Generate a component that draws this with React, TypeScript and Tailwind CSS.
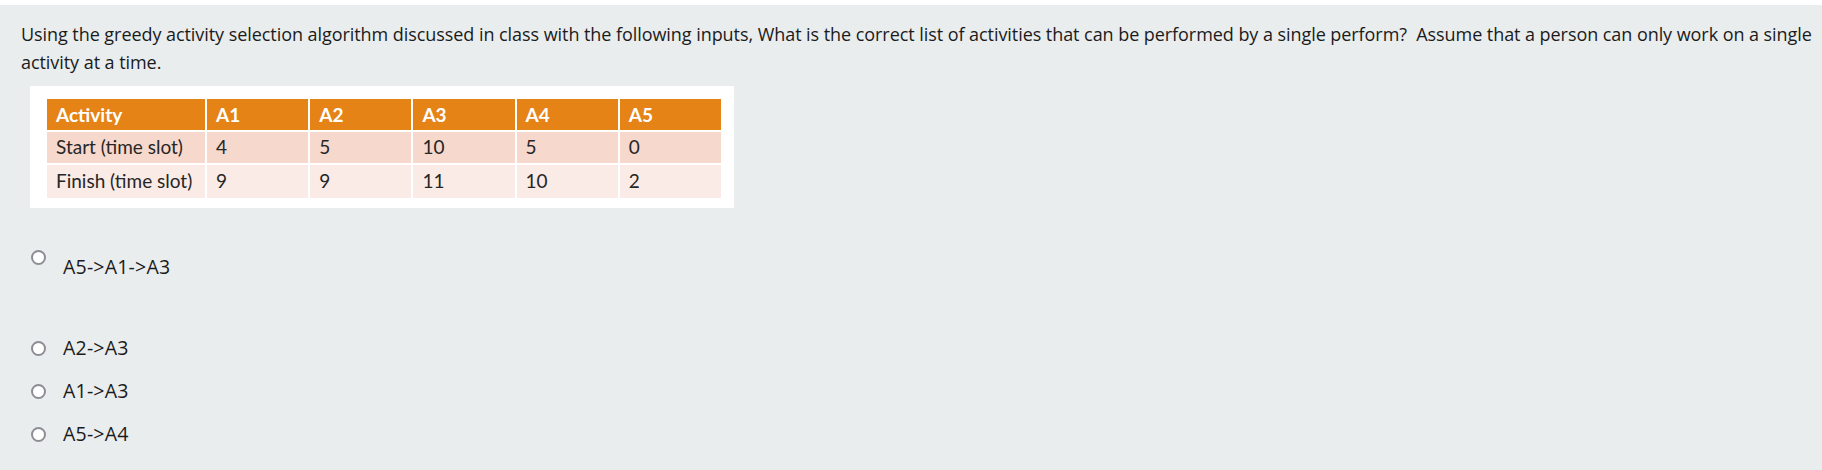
const headers = ["Activity", "A1", "A2", "A3", "A4", "A5"];

const rows = [
  { cells: ["Start (time slot)", "4", "5", "10", "5", "0"], bg: "bg-[#f6d8cd]" },
  { cells: ["Finish (time slot)", "9", "9", "11", "10", "2"], bg: "bg-[#fbebe6]" },
];

const options = ["A2->A3", "A1->A3", "A5->A4"];

function Radio() {
  return (
    <span className="block h-[15px] w-[15px] shrink-0 rounded-full border-2 border-[#8e8d94] bg-white" />
  );
}

export default function App() {
  return (
    <div className="bg-white pt-[5px]" style={{ fontFamily: '"Open Sans", "Noto Sans", sans-serif' }}>
      <div className="h-[465px] bg-[#e9edee] text-[#1b1b1b]">
        <p className="pl-[21px] pt-[15px] text-[18px] leading-[28px] tracking-[-0.06px] whitespace-nowrap">
          Using the greedy activity selection algorithm discussed in class with the following inputs, What is the correct list of activities that can be performed by a single perform?&nbsp; Assume that a person can only work on a single
          <br />
          activity at a time.
        </p>

        <div className="ml-[30px] mt-[10px] h-[122px] w-[704px] bg-white pl-[17px] pt-[13px]">
          <div
            className="grid w-[674px] grid-cols-[158px_repeat(5,minmax(0,1fr))] gap-[2px] text-[19px]"
            style={{ fontFamily: 'Lato, "Open Sans", sans-serif' }}
          >
            {headers.map((h) => (
              <div key={h} className="flex h-[31px] items-center bg-[#e58316] pl-[9px] pt-[2px] font-bold text-white">
                {h}
              </div>
            ))}
            {rows.map((row, ri) =>
              row.cells.map((c, ci) => (
                <div
                  key={`${ri}-${ci}`}
                  className={`flex items-center pl-[9px] text-[#262626] ${row.bg} ${ri === 1 ? "h-[33px]" : "h-[31px]"}`}
                >
                  {c}
                </div>
              ))
            )}
          </div>
        </div>

        <div className="pl-[31px] pt-[42px]">
          <div className="flex items-start gap-[17px]">
            <Radio />
            <span className="mt-[5px] text-[19.5px] leading-[24px] tracking-[0.2px]">A5-&gt;A1-&gt;A3</span>
          </div>

          <div className="mt-[57px] flex flex-col gap-[19px]">
            {options.map((o) => (
              <div key={o} className="flex h-[24px] items-center gap-[17px]">
                <Radio />
                <span className="text-[19.5px] leading-[24px] tracking-[0.2px]">{o}</span>
              </div>
            ))}
          </div>
        </div>
      </div>
    </div>
  );
}
